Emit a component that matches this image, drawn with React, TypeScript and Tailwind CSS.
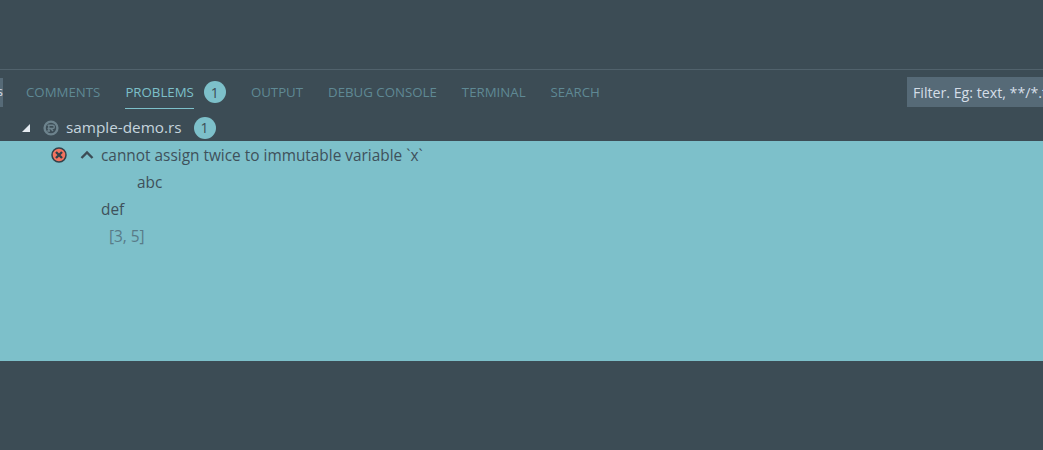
import React from "react";

const tabs = ["COMMENTS", "PROBLEMS", "OUTPUT", "DEBUG CONSOLE", "TERMINAL", "SEARCH"];

function Badge({ count }: { count: number }) {
  return (
    <span className="flex h-[22px] w-[22px] items-center justify-center rounded-full bg-[#7dc0ca] text-[14px] text-[#3c4c55]">
      {count}
    </span>
  );
}

function RustIcon() {
  return (
    <svg width="16" height="16" viewBox="0 0 16 16" fill="none" stroke="#6d838d">
      <circle cx="8" cy="8" r="6.4" strokeWidth="2.4" />
      <path d="M4.5 5.3h5.2a1.6 1.6 0 0 1 0 3.2H4.5M7.5 8.5l2.6 2.6M4.2 11H7M5.8 5.3V11" strokeWidth="1.4" />
    </svg>
  );
}

function ErrorIcon() {
  return (
    <svg width="16" height="16" viewBox="0 0 16 16">
      <circle cx="8" cy="8" r="7" fill="#f4735f" stroke="#33414a" strokeWidth="1.5" />
      <path d="M5 5l6 6M11 5l-6 6" stroke="#33414a" strokeWidth="2.4" />
    </svg>
  );
}

export default function App() {
  return (
    <div className="h-[450px] w-[1043px] overflow-hidden bg-[#3c4c55] font-['Open_Sans',sans-serif] text-[15.4px]">
      <div className="h-[69px]" />

      <div className="border-t border-[#51626c]">
        {/* Panel tabs */}
        <div className="flex h-[44px] items-center">
          <div className="flex h-[29px] w-[3px] items-center justify-end overflow-hidden bg-[#566a77] text-[13px] text-[#d5dee8]">
            <span>s</span>
          </div>
          <div className="ml-[23px] flex items-center gap-[25px] text-[13.25px]">
            {tabs.map((tab) =>
              tab === "PROBLEMS" ? (
                <div key={tab} className="flex items-center gap-[10px]">
                  <span className="relative pt-[2px] text-[#7dc0ca]">
                    {tab}
                    <span className="absolute -bottom-[6px] left-0 right-0 h-px bg-[#7dc0ca]" />
                  </span>
                  <Badge count={1} />
                </div>
              ) : (
                <span key={tab} className="pt-[2px] text-[#5f8994]">
                  {tab}
                </span>
              )
            )}
          </div>
          <div className="ml-auto flex h-[30px] w-[136px] items-center overflow-hidden whitespace-nowrap bg-[#566a77] pl-[6px] pt-[2px] text-[14.2px] text-[#d5dee8]">
            Filter. Eg: text, **/*.ts, !**/node_modules/**
          </div>
        </div>

        {/* File row */}
        <div className="flex h-[27px] items-center text-[#c5d4dd]">
          <svg className="ml-[22px]" width="8" height="8" viewBox="0 0 8 8">
            <path d="M8 0v8H0z" fill="#e5ebf1" />
          </svg>
          <span className="ml-[13px]">
            <RustIcon />
          </span>
          <span className="ml-[7px] text-[15.3px]">sample-demo.rs</span>
          <span className="ml-[12px]">
            <Badge count={1} />
          </span>
        </div>

        {/* Selected problem */}
        <div className="h-[220px] bg-[#7dc0ca] text-[#3f515b]">
          <div className="flex h-[27px] items-center">
            <span className="ml-[51px]">
              <ErrorIcon />
            </span>
            <svg className="ml-[12px]" width="16" height="14" viewBox="0 0 16 14" fill="none">
              <path d="M2.5 10L8 4.5l5.5 5.5" stroke="#3c4c55" strokeWidth="2.4" />
            </svg>
            <span className="ml-[6px] pt-[2px]">cannot assign twice to immutable variable `x`</span>
          </div>
          <div className="flex h-[27px] items-center pl-[137px] pt-[2px]">abc</div>
          <div className="flex h-[27px] items-center pl-[101px] pt-[2px]">def</div>
          <div className="flex h-[27px] items-center pl-[109px] pt-[2px] text-[#587b88]">[3, 5]</div>
        </div>
      </div>
    </div>
  );
}
